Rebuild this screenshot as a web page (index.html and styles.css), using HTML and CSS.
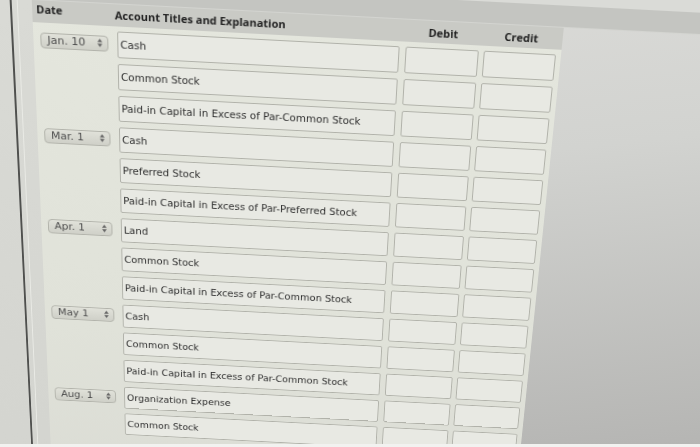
FILE: index.html
```html
<!DOCTYPE html>
<html lang="en">
<head>
<meta charset="utf-8">
<title>Journal entries</title>
<link rel="stylesheet" href="styles.css">
</head>
<body>
<div class="sheet">
  <div class="top-light"></div>
  <div class="band"></div>
  <div class="main">
    <div class="margin"><div class="rule"></div><div class="rule-light"></div></div>
    <div class="panel">
      <div class="head">
        <span class="h-date">Date</span>
        <span class="h-acct">Account Titles and Explanation</span>
        <span class="h-num">Debit</span>
        <span class="h-num h-cr">Credit</span>
      </div>
      <div class="rows">
        <div class="row"><div class="sel"><span>Jan. 10</span><svg class="arr" viewBox="0 0 6 10"><polygon points="0,4 3,0 6,4"/><polygon points="0,6 3,10 6,6"/></svg></div><div class="acct">Cash</div><div class="dr"></div><div class="cr"></div></div>
        <div class="row"><div class="nosel"></div><div class="acct">Common Stock</div><div class="dr"></div><div class="cr"></div></div>
        <div class="row"><div class="nosel"></div><div class="acct">Paid-in Capital in Excess of Par-Common Stock</div><div class="dr"></div><div class="cr"></div></div>
        <div class="row"><div class="sel"><span>Mar. 1</span><svg class="arr" viewBox="0 0 6 10"><polygon points="0,4 3,0 6,4"/><polygon points="0,6 3,10 6,6"/></svg></div><div class="acct">Cash</div><div class="dr"></div><div class="cr"></div></div>
        <div class="row"><div class="nosel"></div><div class="acct">Preferred Stock</div><div class="dr"></div><div class="cr"></div></div>
        <div class="row"><div class="nosel"></div><div class="acct">Paid-in Capital in Excess of Par-Preferred Stock</div><div class="dr"></div><div class="cr"></div></div>
        <div class="row"><div class="sel"><span>Apr. 1</span><svg class="arr" viewBox="0 0 6 10"><polygon points="0,4 3,0 6,4"/><polygon points="0,6 3,10 6,6"/></svg></div><div class="acct">Land</div><div class="dr"></div><div class="cr"></div></div>
        <div class="row"><div class="nosel"></div><div class="acct">Common Stock</div><div class="dr"></div><div class="cr"></div></div>
        <div class="row"><div class="nosel"></div><div class="acct">Paid-in Capital in Excess of Par-Common Stock</div><div class="dr"></div><div class="cr"></div></div>
        <div class="row"><div class="sel"><span>May 1</span><svg class="arr" viewBox="0 0 6 10"><polygon points="0,4 3,0 6,4"/><polygon points="0,6 3,10 6,6"/></svg></div><div class="acct">Cash</div><div class="dr"></div><div class="cr"></div></div>
        <div class="row"><div class="nosel"></div><div class="acct">Common Stock</div><div class="dr"></div><div class="cr"></div></div>
        <div class="row"><div class="nosel"></div><div class="acct">Paid-in Capital in Excess of Par-Common Stock</div><div class="dr"></div><div class="cr"></div></div>
        <div class="row"><div class="sel"><span>Aug. 1</span><svg class="arr" viewBox="0 0 6 10"><polygon points="0,4 3,0 6,4"/><polygon points="0,6 3,10 6,6"/></svg></div><div class="acct">Organization Expense</div><div class="dr"></div><div class="cr"></div></div>
        <div class="row"><div class="nosel"></div><div class="acct">Common Stock</div><div class="dr"></div><div class="cr"></div></div>
      </div>
    </div>
    <div class="beyond"></div>
  </div>
</div>
<div class="edge"></div>
</body>
</html>
```
FILE: styles.css
```css
html, body {
  margin: 0;
  padding: 0;
  width: 700px;
  height: 447px;
  overflow: hidden;
}
body {
  background: linear-gradient(174deg, #dcdcd9 0%, #d2d3d0 40%, #b5b5b3 100%);
  font-family: "DejaVu Sans", Verdana, sans-serif;
}
.sheet {
  width: 820px;
  height: 640px;
  display: flex;
  flex-direction: column;
  transform-origin: 438px 100px;
  transform: translate(-60px, -42px) rotate(3deg) perspective(640px) rotateX(-10deg);
}
.top-light {
  height: 38px;
  background: #dadbd7;
  flex: none;
}
.band {
  height: 22px;
  background: #c4c5c1;
  border-bottom: 1px solid #d3d4d0;
  box-sizing: border-box;
  flex: none;
}
.main {
  flex: 1;
  display: flex;
}
.margin {
  width: 93px;
  flex: none;
  display: flex;
  background: linear-gradient(180deg, #d9dad5, #d3d4cf);
}
.rule {
  margin-left: 71px;
  width: 2px;
  background: #4f504e;
}
.rule-light {
  margin-left: 5px;
  width: 1px;
  background: #e9eae5;
}
.panel {
  width: 527px;
  flex: none;
  background: linear-gradient(180deg, #e4e6dd 0%, #e0e2d9 60%, #dadbd4 100%);
}
.beyond {
  flex: 1;
}
.head {
  height: 22px;
  background: #c9cac5;
  display: flex;
  align-items: center;
  padding-left: 4px;
  font-family: "Open Sans", sans-serif;
  font-weight: 700;
  font-size: 11px;
  color: #232323;
}
.h-date { width: 78px; margin-top: -5px; }
.h-acct { width: 290px; margin-top: -2px; }
.h-num { width: 73px; text-align: center; }
.h-cr { margin-left: 5px; width: 72px; }
.rows {
  padding: 5px 0 0 7px;
  display: flex;
  flex-direction: column;
  gap: 6.5px;
}
.row {
  display: flex;
  height: 26.5px;
}
.sel, .nosel {
  width: 68px;
  height: 16px;
  flex: none;
  box-sizing: border-box;
  margin-top: 4.5px;
}
.sel {
  border: 1px solid #b2b3ab;
  border-radius: 4px;
  background: linear-gradient(180deg, #e0e1d9, #cfd0c8);
  display: flex;
  align-items: center;
  justify-content: space-between;
  padding: 0 5px 0 6px;
  font-size: 11px;
  color: #4e4e4e;
}
.arr {
  width: 5px;
  height: 9px;
  fill: #666;
}
.acct, .dr, .cr {
  box-sizing: border-box;
  height: 26.5px;
  border: 1px solid #b1b2aa;
  border-radius: 2px;
  background: #e8e9e3;
}
.acct {
  width: 282px;
  margin-left: 9px;
  display: flex;
  align-items: center;
  padding-left: 2px;
  font-size: 10.5px;
  color: #2f2f2f;
  white-space: nowrap;
  overflow: hidden;
}
.dr {
  width: 73px;
  margin-left: 6px;
}
.cr {
  width: 72px;
  margin-left: 5px;
}
.edge {
  position: fixed;
  left: 0;
  right: 0;
  bottom: 0;
  height: 3px;
  background: #f2f2f0;
}
```
